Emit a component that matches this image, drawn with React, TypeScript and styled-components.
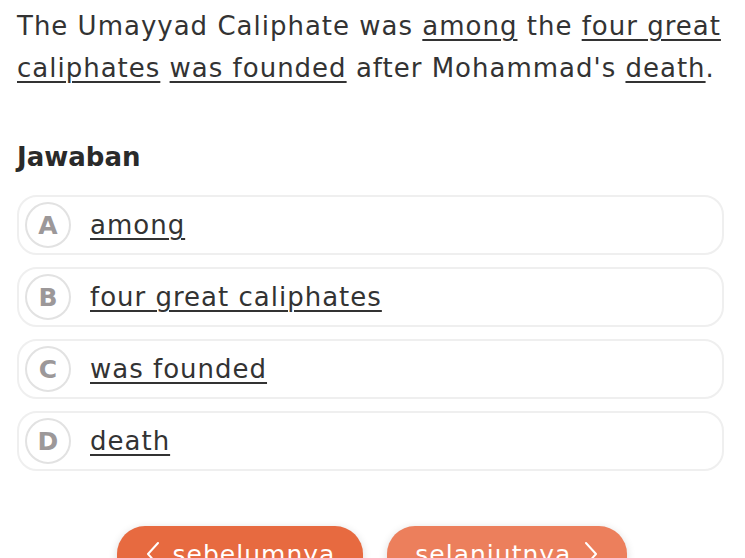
import React from 'react';
import styled, {createGlobalStyle} from "styled-components";

const GlobalStyle = createGlobalStyle`
    body {
        margin: 0;
        background: #ffffff;
        font-family: "DejaVu Sans", "Open Sans", sans-serif;
        color: #333333;
    }
`

type OptionType = {
    letter: string,
    text: string
}

const options: Array<OptionType> = [
    {letter: 'A', text: 'among'},
    {letter: 'B', text: 'four great caliphates'},
    {letter: 'C', text: 'was founded'},
    {letter: 'D', text: 'death'},
]

const ChevronLeft = () => (
    <svg width="16" height="26" viewBox="0 0 16 26" fill="none">
        <path d="M13 2 L3 13 L13 24" stroke="#ffffff" strokeWidth="2" strokeLinecap="round" strokeLinejoin="round"/>
    </svg>
)

const ChevronRight = () => (
    <svg width="16" height="26" viewBox="0 0 16 26" fill="none">
        <path d="M3 2 L13 13 L3 24" stroke="#ffffff" strokeWidth="2" strokeLinecap="round" strokeLinejoin="round"/>
    </svg>
)

export default function App() {
    return (
        <Page>
            <GlobalStyle/>
            <Question>
                The Umayyad Caliphate was <U>among</U> the <U>four great</U> <U>caliphates</U> <U>was founded</U> after Mohammad's <U>death</U>.
            </Question>
            <Title>Jawaban</Title>
            <Options>
                {options.map((item) => (
                    <Option key={item.letter}>
                        <Letter>{item.letter}</Letter>
                        <OptionText>{item.text}</OptionText>
                    </Option>
                ))}
            </Options>
            <Nav>
                <NavButton>
                    <ChevronLeft/>
                    <span>sebelumnya</span>
                </NavButton>
                <NavButton $light>
                    <span>selanjutnya</span>
                    <ChevronRight/>
                </NavButton>
            </Nav>
        </Page>
    );
}

const Page = styled.div`
    padding: 5px 18px 0 17px;
    height: 558px;
    overflow: hidden;
    box-sizing: border-box;
`

const Question = styled.p`
    margin: 0;
    font-size: 26px;
    line-height: 42px;
    letter-spacing: 1px;
    color: #333333;
`

const U = styled.span`
    text-decoration: underline;
    text-decoration-thickness: 2px;
    text-underline-offset: 4px;
`

const Title = styled.h3`
    margin: 52px 0 0;
    font-size: 26px;
    line-height: 32px;
    font-weight: bold;
    color: #2a2a2a;
`

const Options = styled.div`
    display: flex;
    flex-direction: column;
    gap: 12px;
    margin-top: 22px;
    margin-right: 3px;
`

const Option = styled.div`
    display: flex;
    align-items: center;
    gap: 19px;
    height: 60px;
    box-sizing: border-box;
    padding-left: 6px;
    border: 2px solid #efefef;
    border-radius: 20px;
`

const Letter = styled.div`
    width: 46px;
    height: 46px;
    box-sizing: border-box;
    border: 2px solid #e2e2e2;
    border-radius: 50%;
    display: flex;
    align-items: center;
    justify-content: center;
    font-size: 25px;
    font-weight: bold;
    color: #9c9899;
`

const OptionText = styled.span`
    font-size: 26px;
    letter-spacing: 1px;
    color: #333333;
    text-decoration: underline;
    text-decoration-thickness: 2px;
    text-underline-offset: 4px;
`

const Nav = styled.div`
    display: flex;
    justify-content: center;
    gap: 24px;
    margin-top: 55px;
`

const NavButton = styled.button<{ $light?: boolean }>`
    display: flex;
    align-items: center;
    gap: 12px;
    height: 64px;
    padding: 0 28px 8px;
    border: none;
    border-radius: 28px;
    background: ${props => props.$light ? '#ec7f5c' : '#e76a40'};
    box-shadow: 0 2px 8px rgba(0, 0, 0, 0.15);
    color: #ffffff;
    font-family: "DejaVu Sans", "Open Sans", sans-serif;
    font-size: 25px;
    letter-spacing: 1px;
    align-self: flex-start;
`
